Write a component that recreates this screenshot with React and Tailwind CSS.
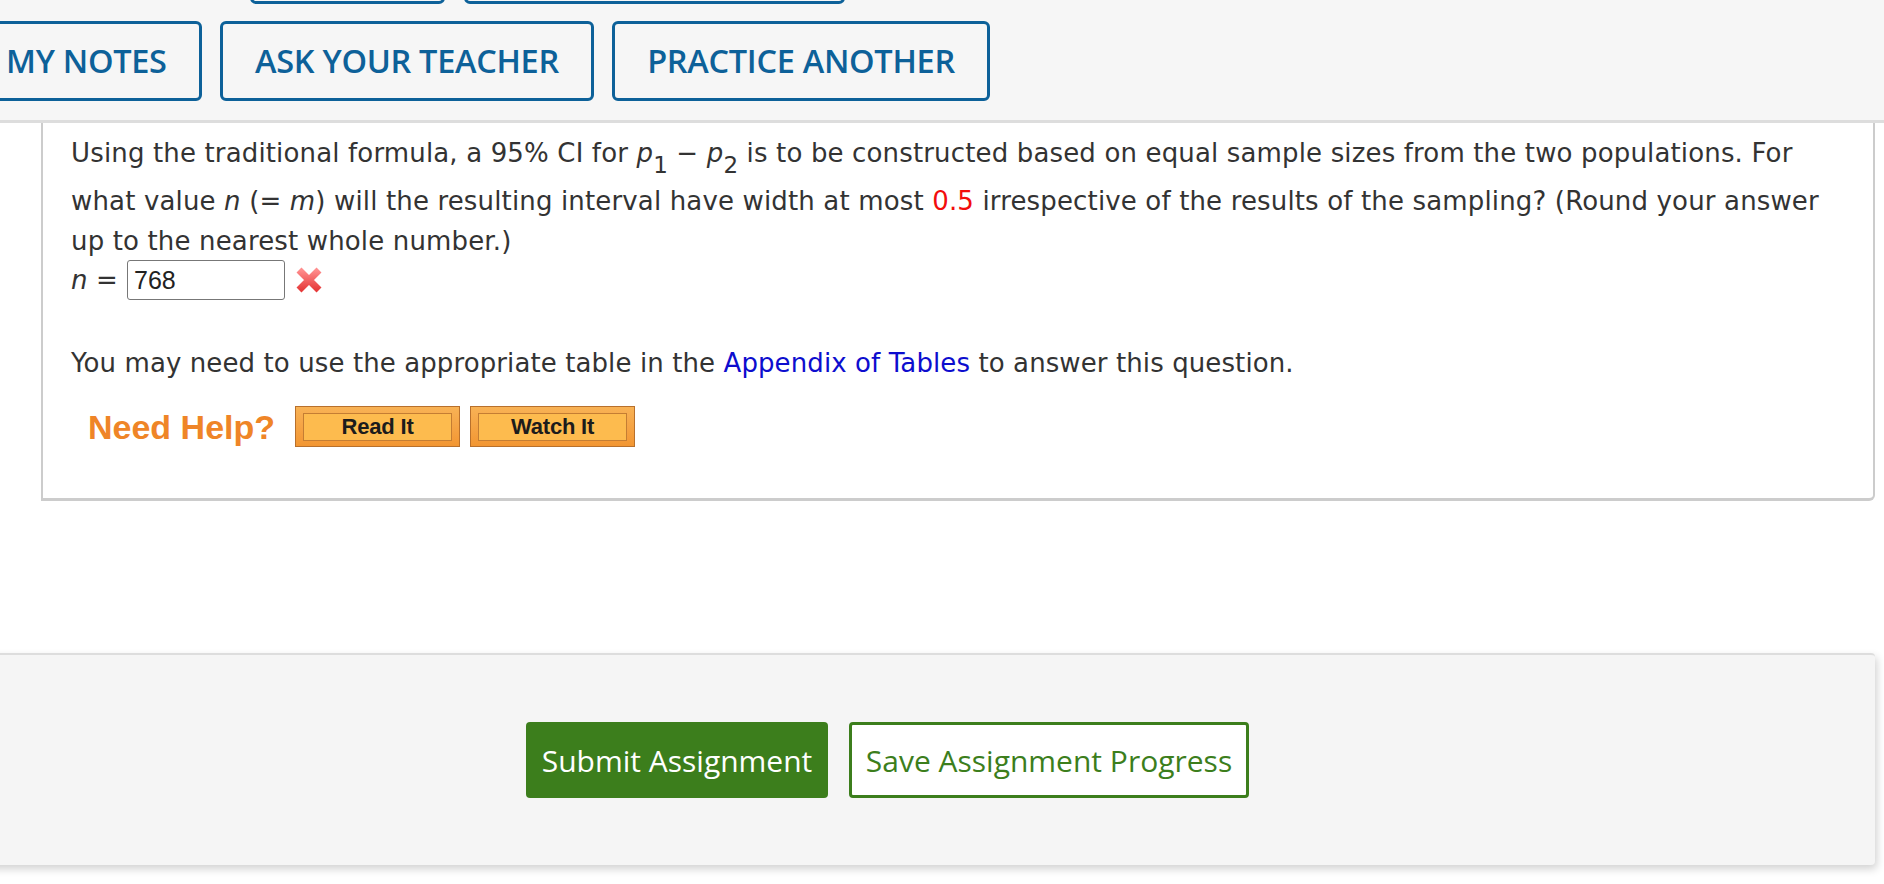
import React from "react";

function HeaderButton({ children, className = "" }) {
  return (
    <div
      className={
        "flex h-[80px] shrink-0 items-center whitespace-nowrap rounded-[6px] border-[3px] border-[#0d6199] px-[33px] text-[32.5px] font-semibold tracking-[-0.3px] text-[#0d6199] " +
        className
      }
      style={{ fontFamily: '"Open Sans", sans-serif' }}
    >
      {children}
    </div>
  );
}

function RedX() {
  return (
    <svg width="28" height="28" viewBox="0 0 28 28" className="ml-[10px] shrink-0">
      <defs>
        <linearGradient id="xg" x1="0" y1="0" x2="0" y2="1">
          <stop offset="0" stopColor="#ff8d8d" />
          <stop offset="1" stopColor="#e63a3a" />
        </linearGradient>
      </defs>
      <path d="M4 4 L24 24 M24 4 L4 24" stroke="url(#xg)" strokeWidth="7" strokeLinecap="butt" fill="none" />
    </svg>
  );
}

function OrangeButton({ children }) {
  return (
    <div className="flex h-[41px] w-[165px] shrink-0 flex-col border border-[#b8702c] bg-gradient-to-b from-[#f8b255] to-[#f29632] px-[7px] pt-[6px] pb-[5px]">
      <div
        className="flex flex-1 items-center justify-center border border-[#c47d33] bg-[#fdbb4e] text-[22px] font-bold leading-none tracking-[-0.2px] text-[#1c1c1c]"
        style={{ fontFamily: '"Liberation Sans", Arial, sans-serif' }}
      >
        {children}
      </div>
    </div>
  );
}

export default function App() {
  const body = { fontFamily: '"DejaVu Sans", Verdana, sans-serif' };
  return (
    <div className="relative h-[884px] w-[1884px] overflow-hidden bg-white">
      {/* header area */}
      <div className="border-b-[3px] border-[#dddddd] bg-[#f6f6f6] pb-[19px]">
        <div className="flex h-[4px] items-end gap-[19px] overflow-hidden pl-[250px]">
          <div className="h-[60px] w-[195px] shrink-0 rounded-[6px] border-[3px] border-[#0d6199]" />
          <div className="h-[60px] w-[381px] shrink-0 rounded-[6px] border-[3px] border-[#0d6199]" />
        </div>
        <div className="mt-[17px] flex gap-[18px]">
          <HeaderButton className="ml-[-30px] w-[232px]">MY NOTES</HeaderButton>
          <HeaderButton className="w-[374px] justify-center">ASK YOUR TEACHER</HeaderButton>
          <HeaderButton className="w-[378px] justify-center">PRACTICE ANOTHER</HeaderButton>
        </div>
      </div>

      {/* question panel */}
      <div
        className="ml-[41px] w-[1834px] rounded-br-[6px] border-r-2 border-b-[3px] border-l-2 border-[#cccccc] pt-[10px] pr-[28px] pb-[51px] pl-[28px] text-[26px] leading-[40px] tracking-[0.15px] text-[#333333]"
        style={body}
      >
        <p className="whitespace-nowrap pb-[4px]">
          Using the traditional formula, a 95% CI for <i>p</i>
          <span className="align-[-11px] text-[23px] leading-none">1</span> − <i>p</i>
          <span className="align-[-11px] text-[23px] leading-none">2</span> is to be constructed based on equal sample
          sizes from the two populations. For
        </p>
        <p className="whitespace-nowrap">
          what value <i>n</i> (= <i>m</i>) will the resulting interval have width at most{" "}
          <span className="text-[#f20d0d]">0.5</span> irrespective of the results of the sampling? (Round your answer
        </p>
        <p className="whitespace-nowrap">up to the nearest whole number.)</p>
        <div className="mt-[-1px] flex h-[40px] items-center">
          <span>
            <i>n</i> =
          </span>
          <div
            className="ml-[9px] flex h-[40px] w-[158px] items-center rounded-[3px] border border-[#777777] pl-[6px] text-[25px] tracking-normal text-[#222222]"
            style={{ fontFamily: '"Liberation Sans", Arial, sans-serif' }}
          >
            768
          </div>
          <RedX />
        </div>
        <p className="mt-[43px] tracking-[0.1px]">
          You may need to use the appropriate table in the <span className="text-[#0d0dce]">Appendix of Tables</span> to
          answer this question.
        </p>
        <div className="mt-[23px] flex items-center">
          <span
            className="ml-[17px] mr-[20px] text-[34px] font-bold leading-none tracking-normal text-[#ef8527]"
            style={{ fontFamily: '"Liberation Sans", Arial, sans-serif' }}
          >
            Need Help?
          </span>
          <OrangeButton>Read It</OrangeButton>
          <div className="w-[10px] shrink-0" />
          <OrangeButton>Watch It</OrangeButton>
        </div>
      </div>

      {/* bottom submit panel */}
      <div className="mt-[152px] ml-[-100px] flex h-[212px] w-[1975px] items-center justify-center rounded-r-[4px] border-t-2 border-[#dddddd] bg-[#f5f5f5] shadow-[2px_4px_8px_rgba(0,0,0,0.18)]">
        <div className="flex gap-[21px]" style={{ fontFamily: '"Open Sans", sans-serif' }}>
          <div className="flex h-[76px] w-[302px] items-center justify-center whitespace-nowrap rounded-[4px] bg-[#3c7e1c] text-[30px] text-white">
            Submit Assignment
          </div>
          <div className="flex h-[76px] w-[400px] items-center justify-center whitespace-nowrap rounded-[4px] border-[3px] border-[#3c7e1c] bg-white text-[30px] text-[#3c7e1c]">
            Save Assignment Progress
          </div>
        </div>
      </div>
    </div>
  );
}
